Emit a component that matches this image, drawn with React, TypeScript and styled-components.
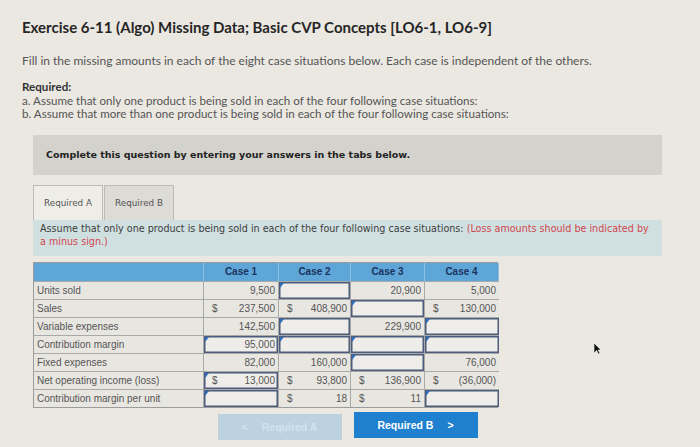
import React from "react";
import styled, { createGlobalStyle } from "styled-components";

const Global = createGlobalStyle`
  html, body { margin: 0; padding: 0; background: #ebe8e2; }
  body { width: 700px; height: 447px; overflow: hidden; }
  * { box-sizing: border-box; }
`;

const Page = styled.div`
  position: relative;
  width: 700px;
  height: 447px;
  padding: 18px 0 0 22px;
  font-family: Lato, "Open Sans", sans-serif;
  color: #555;
`;

const Title = styled.h1`
  margin: 0;
  font-size: 15px;
  line-height: 18px;
  font-weight: 700;
  color: #262626;
`;

const Intro = styled.p`
  margin: 18px 0 0;
  font-size: 12px;
  line-height: 14px;
`;

const Req = styled.div`
  margin-top: 12px;
  font-size: 11.6px;
  line-height: 13.5px;
`;

const ReqHead = styled.div`
  font-weight: 700;
  color: #333;
`;

const Work = styled.div`
  margin: 14px 0 0 11px;
  width: 629px;
  display: flex;
  flex-direction: column;
`;

const Banner = styled.div`
  height: 40px;
  background: #d3d2cd;
  display: flex;
  align-items: center;
  padding-left: 13px;
  font-family: "DejaVu Sans", Verdana, sans-serif;
  font-weight: 700;
  font-size: 9.5px;
  color: #222;
`;

const Tabs = styled.div`
  margin-top: 10px;
  display: flex;
  height: 35px;
`;

const Tab = styled.div<{ $active?: boolean }>`
  width: 70px;
  display: flex;
  align-items: center;
  justify-content: center;
  font-family: "DejaVu Sans", Verdana, sans-serif;
  font-size: 8.8px;
  color: #555;
  background: ${(p) => (p.$active ? "#efede8" : "#dddbd5")};
  border: 1px solid #bdbbb5;
  border-bottom: none;
  margin-right: 1px;
`;

const Note = styled.div`
  background: #d0e0e1;
  padding: 2px 7px 0;
  font-family: "DejaVu Sans", Verdana, sans-serif;
  font-size: 9.6px;
  line-height: 13px;
  color: #3d3d3d;
  height: 36px;
`;

const Red = styled.span`
  color: #d0464f;
`;

const Grid = styled.div`
  margin-top: 6px;
  width: 465px;
  display: grid;
  grid-template-columns: 170px 75px 72px 74px 74px;
  grid-auto-rows: 18px;
  border: 1px solid #9c9c9c;
  font-family: "Liberation Sans", Arial, sans-serif;
  font-size: 10px;
  color: #555;
`;

const Head = styled.div`
  background: #5ea6d7;
  color: #1b3360;
  font-weight: 700;
  display: flex;
  align-items: center;
  justify-content: center;
  border-right: 1px solid #8fc0e2;
  &:last-child { border-right: none; }
`;

const Label = styled.div`
  background: #e8e6e1;
  border-top: 1px solid #a9a9a9;
  border-right: 1px solid #a9a9a9;
  display: flex;
  align-items: center;
  padding-left: 3px;
  white-space: nowrap;
`;

const Cell = styled.div<{ $input?: boolean; $last?: boolean }>`
  position: relative;
  background: ${(p) => (p.$input ? "#eeede9" : "#e8e6e1")};
  border-top: 1px solid #a9a9a9;
  border-right: ${(p) => (p.$last ? "none" : "1px solid #a9a9a9")};
  box-shadow: ${(p) => (p.$input ? "inset 0 0 0 1.5px #4d5d7b" : "none")};
  display: flex;
  align-items: center;
  padding: 0 3px 0 8px;
`;

const Flag = styled.span`
  position: absolute;
  left: 1px;
  top: 1px;
  width: 0;
  height: 0;
  border-top: 5px solid #2f6fbf;
  border-right: 4px solid transparent;
`;

const Dollar = styled.span`
  width: 10px;
`;

const Val = styled.span`
  margin-left: auto;
`;

const Buttons = styled.div`
  margin-top: 4px;
  display: flex;
  justify-content: center;
  align-items: flex-start;
  gap: 12px;
`;

const Btn = styled.div<{ $disabled?: boolean }>`
  width: 124px;
  height: 26px;
  margin-top: ${(p) => (p.$disabled ? "2px" : "0")};
  background: ${(p) => (p.$disabled ? "#bcd2e1" : "#1f80cf")};
  color: ${(p) => (p.$disabled ? "#d3e3ee" : "#fff")};
  display: flex;
  align-items: center;
  justify-content: center;
  gap: 14px;
  font-family: "Liberation Sans", Arial, sans-serif;
  font-weight: 700;
  font-size: 10.5px;
`;

const Cursor = styled.svg`
  position: absolute;
  left: 593px;
  top: 342px;
`;

type C = { input?: boolean; dollar?: boolean; v?: string };
const g = (v: string, dollar = false): C => ({ v, dollar });
const inp = (v = "", dollar = false): C => ({ input: true, v, dollar });

const rows: { label: string; cells: C[] }[] = [
  { label: "Units sold", cells: [g("9,500"), inp(), g("20,900"), g("5,000")] },
  { label: "Sales", cells: [g("237,500", true), g("408,900", true), inp(), g("130,000", true)] },
  { label: "Variable expenses", cells: [g("142,500"), inp(), g("229,900"), inp()] },
  { label: "Contribution margin", cells: [inp("95,000"), inp(), inp(), inp()] },
  { label: "Fixed expenses", cells: [g("82,000"), g("160,000"), inp(), g("76,000")] },
  { label: "Net operating income (loss)", cells: [inp("13,000", true), g("93,800", true), g("136,900", true), g("(36,000)", true)] },
  { label: "Contribution margin per unit", cells: [inp(), g("18", true), g("11", true), inp()] },
];

export default function App() {
  return (
    <Page>
      <Global />
      <Title>Exercise 6-11 (Algo) Missing Data; Basic CVP Concepts [LO6-1, LO6-9]</Title>
      <Intro>
        Fill in the missing amounts in each of the eight case situations below. Each case is independent of the others.
      </Intro>
      <Req>
        <ReqHead>Required:</ReqHead>
        <div>a. Assume that only one product is being sold in each of the four following case situations:</div>
        <div>b. Assume that more than one product is being sold in each of the four following case situations:</div>
      </Req>
      <Work>
        <Banner>Complete this question by entering your answers in the tabs below.</Banner>
        <Tabs>
          <Tab $active>Required A</Tab>
          <Tab>Required B</Tab>
        </Tabs>
        <Note>
          Assume that only one product is being sold in each of the four following case situations:{" "}
          <Red>(Loss amounts should be indicated by</Red>
          <br />
          <Red>a minus sign.)</Red>
        </Note>
        <Grid>
          <Head />
          <Head>Case 1</Head>
          <Head>Case 2</Head>
          <Head>Case 3</Head>
          <Head>Case 4</Head>
          {rows.map((r) => (
            <React.Fragment key={r.label}>
              <Label>{r.label}</Label>
              {r.cells.map((c, i) => (
                <Cell key={i} $input={c.input} $last={i === 3}>
                  {c.input && <Flag />}
                  <Dollar>{c.dollar ? "$" : ""}</Dollar>
                  <Val>{c.v}</Val>
                </Cell>
              ))}
            </React.Fragment>
          ))}
        </Grid>
        <Buttons>
          <Btn $disabled>
            <span>&lt;</span>
            <span>Required A</span>
          </Btn>
          <Btn>
            <span>Required B</span>
            <span>&gt;</span>
          </Btn>
        </Buttons>
      </Work>
      <Cursor width="9" height="13" viewBox="0 0 9 13">
        <path d="M1 1 L1 11 L3.5 8.5 L5.5 12 L7 11.2 L5 8 L8 8 Z" fill="#111" stroke="#eee" strokeWidth="0.6" />
      </Cursor>
    </Page>
  );
}
